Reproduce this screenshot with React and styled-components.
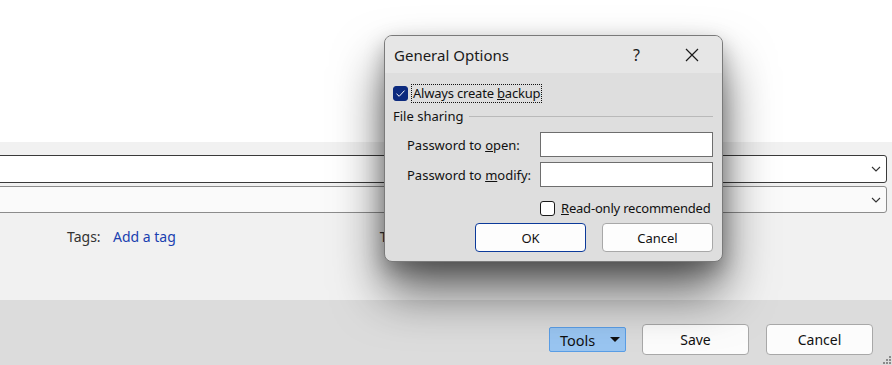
import styled, { createGlobalStyle } from "styled-components";

const GlobalStyle = createGlobalStyle`
  html, body {
    margin: 0;
    padding: 0;
    background: #ffffff;
    overflow: hidden;
  }
  body {
    font-family: "Noto Sans", "Open Sans", sans-serif;
    color: #1a1a1a;
  }
`;

const FONT = `"Noto Sans", "Open Sans", sans-serif`;

function Chevron() {
  return (
    <svg width="10" height="6" viewBox="0 0 10 6" aria-hidden="true">
      <path d="M1 1 L5 5 L9 1" fill="none" stroke="#333" strokeWidth="1.1" />
    </svg>
  );
}

function Check() {
  return (
    <svg width="11" height="9" viewBox="0 0 11 9" aria-hidden="true">
      <path d="M1.5 4.8 L4.2 7.3 L9.5 1.6" fill="none" stroke="#ffffff" strokeWidth="1" />
    </svg>
  );
}

export default function App() {
  return (
    <>
      <GlobalStyle />
      <Page>
        <TopArea />
        <Panel>
          <Combo $variant="focus">
            <Chevron />
          </Combo>
          <Combo $variant="plain">
            <Chevron />
          </Combo>
          <TagRow>
            <TagLabel>Tags:</TagLabel>
            <TagLink>Add a tag</TagLink>
            <HiddenLabel>T</HiddenLabel>
          </TagRow>
        </Panel>
        <Footer>
          <ToolsButton>
            <span>Tools</span>
            <Caret />
          </ToolsButton>
          <FooterButton>Save</FooterButton>
          <FooterButton>Cancel</FooterButton>
          <Grip>
            <svg width="8" height="8" viewBox="0 0 8 8" aria-hidden="true">
              <rect x="6" y="0" width="2" height="2" fill="#8a8a8a" />
              <rect x="3" y="3" width="2" height="2" fill="#8a8a8a" />
              <rect x="6" y="3" width="2" height="2" fill="#8a8a8a" />
              <rect x="0" y="6" width="2" height="2" fill="#8a8a8a" />
              <rect x="3" y="6" width="2" height="2" fill="#8a8a8a" />
              <rect x="6" y="6" width="2" height="2" fill="#8a8a8a" />
            </svg>
          </Grip>
        </Footer>

        <Dialog role="dialog" aria-label="General Options">
          <TitleBar>
            <Title>General Options</Title>
            <TitleIcons>
              <HelpGlyph>?</HelpGlyph>
              <CloseGlyph>
                <svg width="14" height="14" viewBox="0 0 14 14" aria-hidden="true">
                  <path d="M1 1 L13 13 M13 1 L1 13" stroke="#1a1a1a" strokeWidth="1.2" />
                </svg>
              </CloseGlyph>
            </TitleIcons>
          </TitleBar>
          <Body>
            <CheckRow>
              <Box $checked>
                <Check />
              </Box>
              <FocusLabel>
                Always create <u>b</u>ackup
              </FocusLabel>
            </CheckRow>
            <Group>
              <GroupTitle>File sharing</GroupTitle>
              <GroupLine />
            </Group>
            <FieldGrid>
              <FieldLabel>
                Password to <u>o</u>pen:
              </FieldLabel>
              <Field />
              <FieldLabel>
                Password to <u>m</u>odify:
              </FieldLabel>
              <Field />
            </FieldGrid>
            <ReadOnlyRow>
              <Box />
              <ReadOnlyLabel>
                <u>R</u>ead-only recommended
              </ReadOnlyLabel>
            </ReadOnlyRow>
            <DialogButtons>
              <DialogButton $primary>OK</DialogButton>
              <DialogButton>Cancel</DialogButton>
            </DialogButtons>
          </Body>
        </Dialog>
      </Page>
    </>
  );
}

const Page = styled.div`
  position: relative;
  width: 892px;
  height: 365px;
  display: flex;
  flex-direction: column;
  font-family: ${FONT};
`;

const TopArea = styled.div`
  height: 142px;
  background: #ffffff;
`;

const Panel = styled.div`
  height: 158px;
  background: #f1f1f1;
  display: flex;
  flex-direction: column;
  padding: 13px 5px 0 0;
  box-sizing: border-box;
  margin-left: -1px;
`;

const Combo = styled.div`
  height: ${({ $variant }) => ($variant === "focus" ? "28px" : "27px")};
  box-sizing: border-box;
  margin-bottom: ${({ $variant }) => ($variant === "focus" ? "3px" : "0")};
  border: 1px solid ${({ $variant }) => ($variant === "focus" ? "#3a3a3a" : "#8c8c8c")};
  background: ${({ $variant }) => ($variant === "focus" ? "#ffffff" : "#fafafa")};
  border-radius: 0 3px 3px 0;
  display: flex;
  align-items: center;
  justify-content: flex-end;
  padding-right: 5px;
`;

const TagRow = styled.div`
  display: flex;
  align-items: center;
  height: 20px;
  margin-top: 13px;
  padding-left: 68px;
  font-size: 14px;
`;

const TagLabel = styled.span`
  color: #333333;
  width: 46px;
`;

const TagLink = styled.span`
  color: #1a3fb0;
`;

const HiddenLabel = styled.span`
  margin-left: 204px;
  color: #333333;
`;

const Footer = styled.div`
  position: relative;
  flex: 1;
  background: #dcdcdc;
  display: flex;
  align-items: center;
  justify-content: flex-end;
  gap: 17px;
  padding: 14px 19px 0 0;
  box-sizing: border-box;
`;

const ToolsButton = styled.div`
  width: 77px;
  height: 25px;
  box-sizing: border-box;
  border: 1px solid #5a9ee6;
  border-radius: 2px;
  background: #99c5f1;
  display: flex;
  align-items: center;
  justify-content: space-between;
  padding: 0 5px 0 10px;
  font-size: 14.5px;
  color: #111111;
  margin-right: -1px;
`;

const Caret = styled.span`
  width: 0;
  height: 0;
  border-left: 5px solid transparent;
  border-right: 5px solid transparent;
  border-top: 5px solid #111111;
`;

const FooterButton = styled.div`
  width: 107px;
  height: 31px;
  box-sizing: border-box;
  border: 1px solid #a8a8a8;
  border-radius: 4px;
  background: #fcfcfc;
  display: flex;
  align-items: center;
  justify-content: center;
  font-size: 14px;
  color: #111111;
`;

const Grip = styled.div`
  position: absolute;
  right: 1px;
  bottom: 1px;
  display: flex;
`;

const Dialog = styled.div`
  position: absolute;
  left: 384px;
  top: 35px;
  width: 339px;
  height: 227px;
  box-sizing: border-box;
  border: 1px solid #7a7a7a;
  border-radius: 8px;
  background: #dedede;
  overflow: hidden;
  display: flex;
  flex-direction: column;
  box-shadow: 0 30px 50px rgba(0, 0, 0, 0.6), 0 8px 20px rgba(0, 0, 0, 0.25);
  font-size: 13px;
  color: #111111;
`;

const TitleBar = styled.div`
  height: 37px;
  flex-shrink: 0;
  background: #e6e6e6;
  display: flex;
  align-items: center;
  justify-content: space-between;
  padding: 0 23px 0 9px;
`;

const Title = styled.span`
  font-size: 15px;
  color: #1a1a1a;
`;

const TitleIcons = styled.div`
  display: flex;
  align-items: center;
  gap: 45px;
`;

const HelpGlyph = styled.span`
  font-size: 16px;
  color: #1a1a1a;
`;

const CloseGlyph = styled.span`
  display: flex;
`;

const Body = styled.div`
  display: flex;
  flex-direction: column;
  padding: 10px 9px 0 8px;
`;

const CheckRow = styled.div`
  display: flex;
  align-items: center;
  gap: 3px;
  height: 20px;
`;

const Box = styled.span`
  width: 15px;
  height: 15px;
  box-sizing: border-box;
  border-radius: 3px;
  border: 1px solid ${({ $checked }) => ($checked ? "#0c2a7e" : "#1a1a1a")};
  background: ${({ $checked }) => ($checked ? "#0c2a7e" : "#ffffff")};
  display: flex;
  align-items: center;
  justify-content: center;
  flex-shrink: 0;
`;

const FocusLabel = styled.span`
  border: 1px dotted #111111;
  padding: 0 1px;
  line-height: 17px;
  letter-spacing: -0.2px;
`;

const Group = styled.div`
  display: flex;
  align-items: center;
  gap: 6px;
  height: 20px;
  margin-top: 3px;
`;

const GroupTitle = styled.span``;

const GroupLine = styled.div`
  flex: 1;
  height: 1px;
  background: #b9b9b9;
`;

const FieldGrid = styled.div`
  display: grid;
  grid-template-columns: 133px 173px;
  grid-auto-rows: 25px;
  row-gap: 5px;
  align-items: center;
  margin-top: 6px;
  padding-left: 14px;
`;

const FieldLabel = styled.span``;

const Field = styled.div`
  height: 25px;
  box-sizing: border-box;
  border: 1px solid #6e6e6e;
  background: #ffffff;
`;

const ReadOnlyRow = styled.div`
  display: flex;
  align-items: center;
  gap: 6px;
  height: 18px;
  margin-top: 12px;
  padding-left: 147px;
`;

const ReadOnlyLabel = styled.span`
  white-space: nowrap;
  letter-spacing: -0.2px;
`;

const DialogButtons = styled.div`
  display: flex;
  justify-content: flex-end;
  gap: 16px;
  margin-top: 6px;
`;

const DialogButton = styled.div`
  width: 111px;
  height: 29px;
  box-sizing: border-box;
  border: 1px solid ${({ $primary }) => ($primary ? "#0c3a9a" : "#a8a8a8")};
  border-radius: 4px;
  background: #fdfdfd;
  display: flex;
  align-items: center;
  justify-content: center;
  font-size: 13px;
`;
